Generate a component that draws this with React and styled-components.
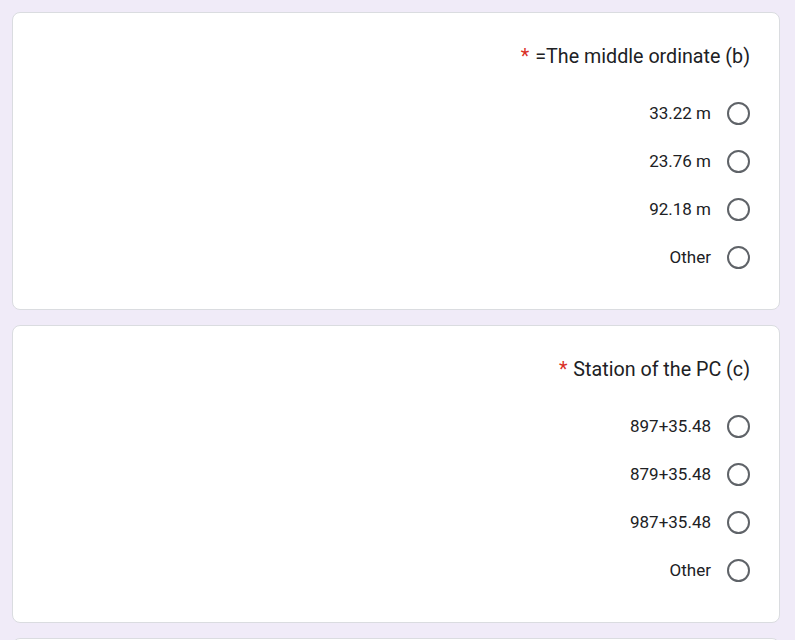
import styled, { createGlobalStyle } from 'styled-components';

const GlobalStyle = createGlobalStyle`
    html, body {
        margin: 0;
        padding: 0;
        background: #f0ebf8;
    }
    body {
        font-family: Roboto, "Liberation Sans", Arial, sans-serif;
        color: #202124;
    }
`;

const questions = [
    {
        title: '=The middle ordinate (b)',
        options: ['33.22 m', '23.76 m', '92.18 m', 'Other'],
    },
    {
        title: 'Station of the PC (c)',
        options: ['897+35.48', '879+35.48', '987+35.48', 'Other'],
    },
];

export default function App () {
    return (
        <Page dir="rtl">
            <GlobalStyle />
            {questions.map((question) => (
                <Card key={question.title}>
                    <Title>
                        <span dir="ltr">{question.title}</span>
                        <Required>*</Required>
                    </Title>
                    <Options>
                        {question.options.map((option) => (
                            <Option key={option}>
                                <Radio />
                                <Label dir="ltr">{option}</Label>
                            </Option>
                        ))}
                    </Options>
                </Card>
            ))}
            <Card partial />
        </Page>
    );
}

const Page = styled.div`
    display: flex;
    flex-direction: column;
    gap: 15px;
    padding: 12px 15px 0 12px;
    height: 640px;
    box-sizing: border-box;
    overflow: hidden;
`;

const Card = styled.section`
    flex-shrink: 0;
    background: #ffffff;
    border: 1px solid #dadce0;
    border-radius: 8px;
    box-sizing: border-box;
    height: ${({ partial }) => partial ? '40px' : '298px'};
    padding: 31px 29px 0 24px;
`;

const Title = styled.div`
    display: flex;
    gap: 6px;
    font-size: 19.7px;
    line-height: 26px;
    color: #202124;
`;

const Required = styled.span`
    color: #d93025;
`;

const Options = styled.div`
    display: flex;
    flex-direction: column;
    margin-top: 19px;
`;

const Option = styled.label`
    display: flex;
    align-items: center;
    gap: 16px;
    height: 48px;
`;

const Radio = styled.span`
    width: 23px;
    height: 23px;
    border: 2.3px solid #5f6368;
    border-radius: 50%;
    box-sizing: border-box;
    flex-shrink: 0;
`;

const Label = styled.span`
    font-size: 17px;
    color: #202124;
`;
